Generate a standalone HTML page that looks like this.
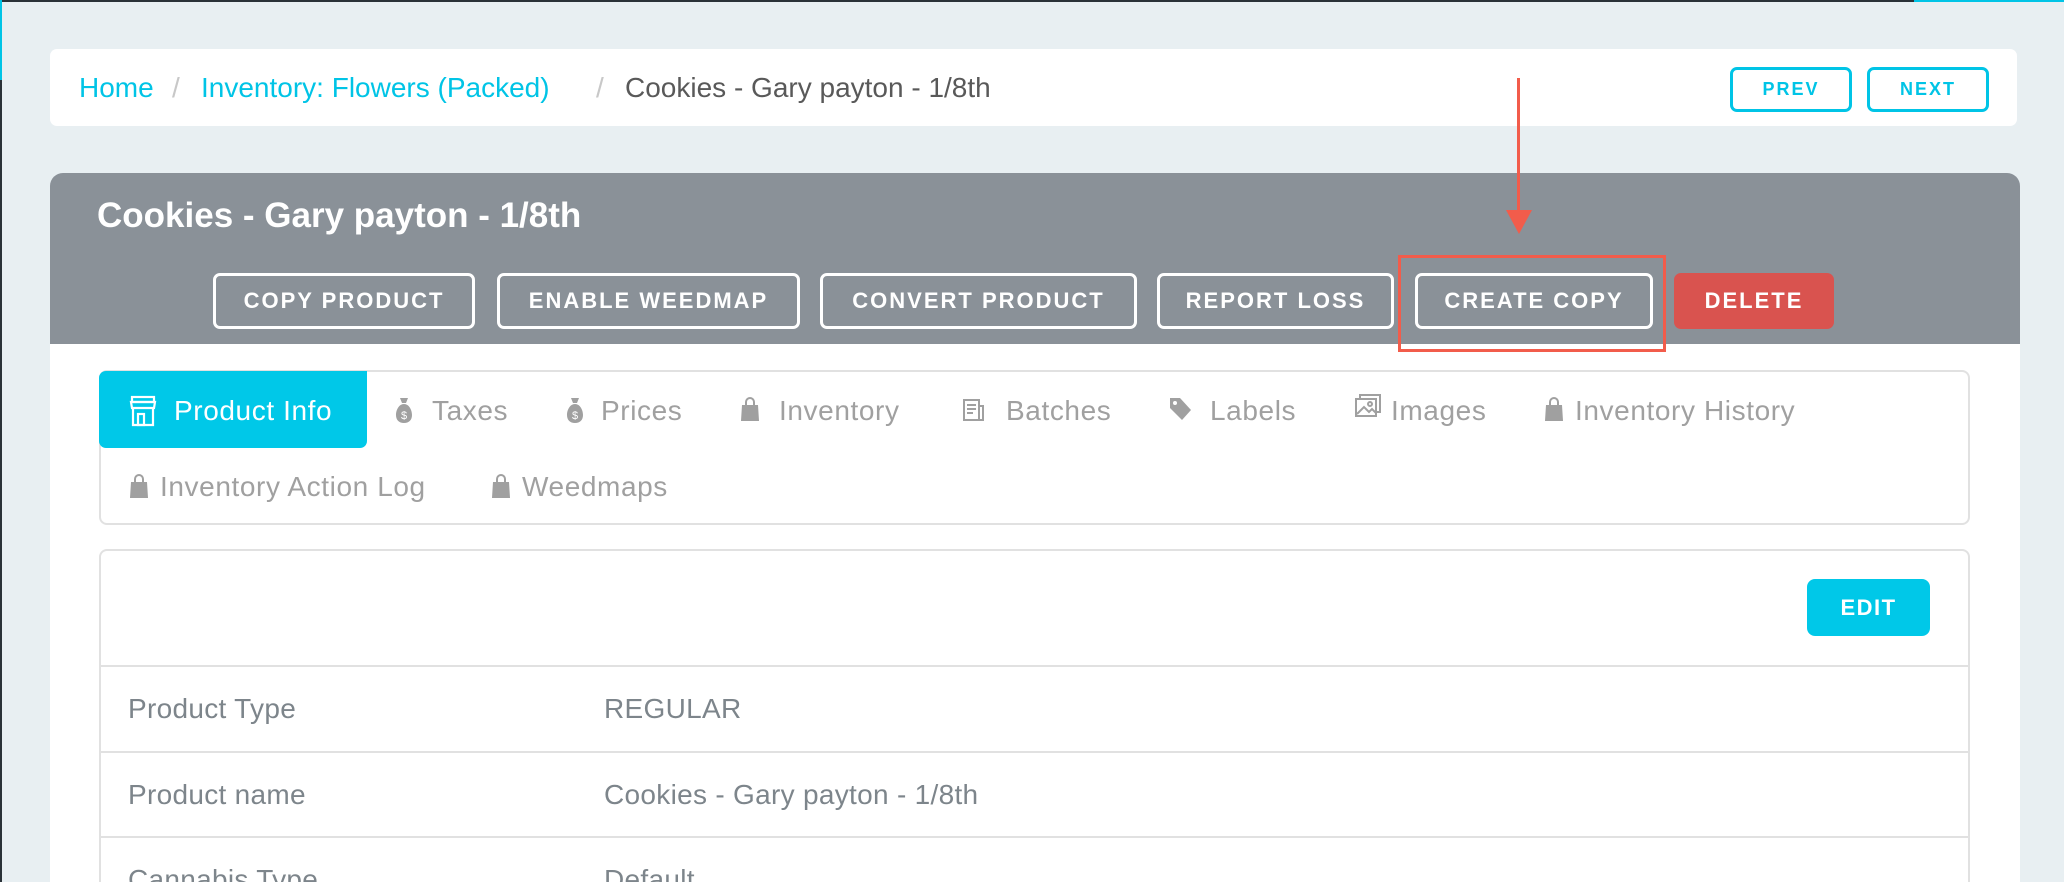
<!DOCTYPE html>
<html><head><meta charset="utf-8"><style>
*{margin:0;padding:0;box-sizing:border-box}
html,body{width:2064px;height:882px;overflow:hidden}
body{background:#e8eff2;font-family:"Liberation Sans",sans-serif;position:relative}
.a{position:absolute}
.bc{left:50px;top:49px;width:1967px;height:77px;background:#fff;border-radius:7px}
.t{position:absolute;white-space:nowrap;line-height:1}
.nb{position:absolute;top:67px;height:45px;width:122px;border:3px solid #00c4e6;border-radius:7px;color:#00c4e6;font-weight:bold;font-size:18px;letter-spacing:2px;display:flex;align-items:center;justify-content:center}
.hdr{left:50px;top:173px;width:1970px;height:171px;background:#8a9198;border-radius:13px 13px 0 0}
.body{left:50px;top:344px;width:1970px;height:538px;background:#fff}
.btn{position:absolute;top:273px;height:56px;border:3px solid #fff;border-radius:7px;color:#fff;font-weight:bold;font-size:22px;letter-spacing:2px;display:flex;align-items:center;justify-content:center}
.tabs{left:99px;top:370px;width:1871px;height:155px;border:2px solid #e1e1e1;border-radius:8px}
.tab{position:absolute;font-size:28px;letter-spacing:0.6px;color:#a0a0a0;white-space:nowrap;line-height:1}
.ic{position:absolute}
.box{left:99px;top:549px;width:1871px;height:360px;border:2px solid #e1e1e1;border-radius:8px}
.hr{position:absolute;left:99px;width:1871px;height:2px;background:#e1e1e1}
.lb{position:absolute;font-size:28px;letter-spacing:0.3px;color:#7d858b;white-space:nowrap;line-height:1}
</style></head><body>
<div class="a" style="left:0;top:0;width:2064px;height:2px;background:#2a3238"></div>
<div class="a" style="left:1914px;top:0;width:150px;height:2px;background:#00c4e6"></div>
<div class="a" style="left:0;top:0;width:2px;height:80px;background:#00c4e6"></div>
<div class="a" style="left:0;top:80px;width:2px;height:802px;background:#2a3238"></div>

<div class="a bc"></div>
<div class="t" style="left:79px;top:74px;font-size:28px;color:#00c4e6">Home</div>
<div class="t" style="left:172px;top:74px;font-size:28px;color:#c8c8c8">/</div>
<div class="t" style="left:201px;top:74px;font-size:28px;color:#00c4e6">Inventory: Flowers (Packed)</div>
<div class="t" style="left:596px;top:74px;font-size:28px;color:#c8c8c8">/</div>
<div class="t" style="left:625px;top:74px;font-size:28px;color:#595959">Cookies - Gary payton - 1/8th</div>
<div class="nb" style="left:1730px">PREV</div>
<div class="nb" style="left:1867px">NEXT</div>

<div class="a hdr"></div>
<div class="a body"></div>
<div class="t" style="left:97px;top:198px;font-size:35px;font-weight:bold;color:#fff">Cookies - Gary payton - 1/8th</div>
<div class="btn" style="left:213px;width:262px">COPY PRODUCT</div>
<div class="btn" style="left:497px;width:303px">ENABLE WEEDMAP</div>
<div class="btn" style="left:820px;width:317px">CONVERT PRODUCT</div>
<div class="btn" style="left:1157px;width:237px">REPORT LOSS</div>
<div class="btn" style="left:1415px;width:238px">CREATE COPY</div>
<div class="btn" style="left:1674px;width:160px;background:#d9534f;border-color:#d9534f">DELETE</div>

<div class="a" style="left:1398px;top:255px;width:268px;height:97px;border:3px solid #f25c4b"></div>
<div class="a" style="left:1517px;top:78px;width:3px;height:140px;background:#f25c4b"></div>
<svg class="a" style="left:1506px;top:210px" width="26" height="24"><polygon points="0,0 26,0 13,24" fill="#f25c4b"/></svg>

<div class="a tabs"></div>
<div class="a" style="left:99px;top:371px;width:268px;height:77px;background:#00c8e8;border-radius:7px 0 7px 7px"></div>
<svg class="ic" style="left:129px;top:395px" width="28" height="32" viewBox="0 0 28 32" fill="none" stroke="#fff" stroke-width="2.2"><rect x="3" y="2" width="22" height="5"/><path d="M2 7h24l-1 6H3z"/><path d="M4 14v16h20V14"/><rect x="9" y="19" width="6" height="11"/></svg>
<div class="tab" style="left:174px;top:397px;color:#fff">Product Info</div>

<svg class="ic" style="left:395px;top:396px" width="18" height="28" viewBox="0 0 18 28"><path d="M5 2h8l-2 5h-4z M9 8c5 0 8 6 8 11s-3 8-8 8-8-3-8-8 3-11 8-11z" fill="#a0a0a0"/><text x="9" y="23" font-size="11" fill="#fff" text-anchor="middle" font-family="Liberation Sans">$</text></svg>
<div class="tab" style="left:432px;top:397px">Taxes</div>
<svg class="ic" style="left:566px;top:396px" width="18" height="28" viewBox="0 0 18 28"><path d="M5 2h8l-2 5h-4z M9 8c5 0 8 6 8 11s-3 8-8 8-8-3-8-8 3-11 8-11z" fill="#a0a0a0"/><text x="9" y="23" font-size="11" fill="#fff" text-anchor="middle" font-family="Liberation Sans">$</text></svg>
<div class="tab" style="left:601px;top:397px">Prices</div>
<svg class="ic" style="left:740px;top:396px" width="20" height="26" viewBox="0 0 20 26"><path d="M6 9V6a4 4 0 018 0v3" stroke="#a0a0a0" stroke-width="2" fill="none"/><path d="M2 9h16l1 16H1z" fill="#a0a0a0"/></svg>
<div class="tab" style="left:779px;top:397px">Inventory</div>
<svg class="ic" style="left:962px;top:398px" width="24" height="24" viewBox="0 0 24 24" fill="none" stroke="#a0a0a0" stroke-width="2"><rect x="2" y="2" width="15" height="20"/><path d="M17 8h4v14H6M5 7h9M5 11h9M5 15h6"/></svg>
<div class="tab" style="left:1006px;top:397px">Batches</div>
<svg class="ic" style="left:1168px;top:396px" width="24" height="26" viewBox="0 0 24 26"><path d="M2 2h10l11 12-9 10L2 12z" fill="#a0a0a0"/><circle cx="7" cy="7" r="2" fill="#fff"/></svg>
<div class="tab" style="left:1210px;top:397px">Labels</div>
<svg class="ic" style="left:1354px;top:393px" width="28" height="26" viewBox="0 0 28 26" fill="none" stroke="#a0a0a0" stroke-width="2"><rect x="6" y="2" width="20" height="17"/><rect x="2" y="6" width="20" height="17" fill="#fff"/><path d="M3 21l7-7 5 5 3-3 4 4"/><circle cx="16" cy="11" r="2"/></svg>
<div class="tab" style="left:1391px;top:397px">Images</div>
<svg class="ic" style="left:1544px;top:396px" width="20" height="26" viewBox="0 0 20 26"><path d="M6 9V6a4 4 0 018 0v3" stroke="#a0a0a0" stroke-width="2" fill="none"/><path d="M2 9h16l1 16H1z" fill="#a0a0a0"/></svg>
<div class="tab" style="left:1575px;top:397px">Inventory History</div>

<svg class="ic" style="left:129px;top:473px" width="20" height="26" viewBox="0 0 20 26"><path d="M6 9V6a4 4 0 018 0v3" stroke="#a0a0a0" stroke-width="2" fill="none"/><path d="M2 9h16l1 16H1z" fill="#a0a0a0"/></svg>
<div class="tab" style="left:160px;top:473px">Inventory Action Log</div>
<svg class="ic" style="left:491px;top:473px" width="20" height="26" viewBox="0 0 20 26"><path d="M6 9V6a4 4 0 018 0v3" stroke="#a0a0a0" stroke-width="2" fill="none"/><path d="M2 9h16l1 16H1z" fill="#a0a0a0"/></svg>
<div class="tab" style="left:522px;top:473px">Weedmaps</div>

<div class="a box"></div>
<div class="a" style="left:1807px;top:579px;width:123px;height:57px;background:#00c8e8;border-radius:8px;color:#fff;font-weight:bold;font-size:22px;letter-spacing:1.5px;display:flex;align-items:center;justify-content:center">EDIT</div>
<div class="hr" style="top:665px"></div>
<div class="hr" style="top:751px"></div>
<div class="hr" style="top:836px"></div>
<div class="lb" style="left:128px;top:695px">Product Type</div>
<div class="lb" style="left:604px;top:695px">REGULAR</div>
<div class="lb" style="left:128px;top:781px">Product name</div>
<div class="lb" style="left:604px;top:781px">Cookies - Gary payton - 1/8th</div>
<div class="lb" style="left:128px;top:866px">Cannabis Type</div>
<div class="lb" style="left:604px;top:866px">Default</div>
</body></html>
